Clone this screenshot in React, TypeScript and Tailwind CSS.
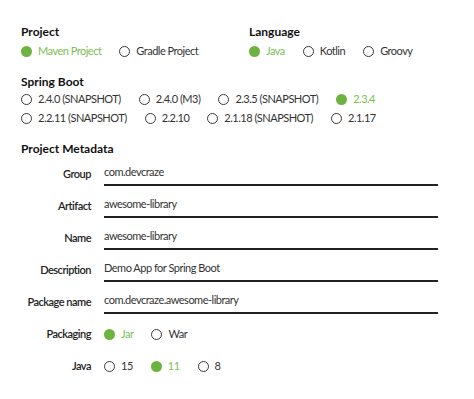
import React from 'react'

const green = 'bg-[#6db33f]'

function Radio({ label, checked }: { label: string; checked?: boolean }) {
  return (
    <div className="flex items-center gap-[6px]">
      <span
        className={`w-[11px] h-[11px] rounded-full shrink-0 ${
          checked ? `${green}` : 'border-[1.5px] border-[#3a3a3a] bg-white'
        }`}
      />
      <span className={checked ? 'text-[#7bbf52]' : 'text-[#333]'}>{label}</span>
    </div>
  )
}

function Heading({ children }: { children: React.ReactNode }) {
  return <h3 className="h-4 leading-4 text-[12px] font-bold text-[#111] tracking-normal">{children}</h3>
}

function Field({ label, children, line = true }: { label: string; children: React.ReactNode; line?: boolean }) {
  return (
    <div className="flex items-stretch h-6">
      <div className="w-[70px] flex items-center justify-end text-[#222] font-semibold">{label}</div>
      <div
        className={`ml-[13px] w-[334px] flex items-center ${
          line ? 'border-b-2 border-[#222] pb-[1px]' : ''
        }`}
      >
        {children}
      </div>
    </div>
  )
}

export default function App() {
  return (
    <div
      className="w-[474px] h-[399px] bg-white pt-6 pl-[21px] text-[11px] text-[#333] tracking-[-0.5px]"
      style={{ fontFamily: 'Lato, "Open Sans", sans-serif' }}
    >
      {/* Project / Language */}
      <div className="flex">
        <div className="w-[228px]">
          <Heading>Project</Heading>
          <div className="flex h-[22px] items-center gap-[18px]">
            <Radio label="Maven Project" checked />
            <Radio label="Gradle Project" />
          </div>
        </div>
        <div>
          <Heading>Language</Heading>
          <div className="flex h-[22px] items-center gap-[18px]">
            <Radio label="Java" checked />
            <Radio label="Kotlin" />
            <Radio label="Groovy" />
          </div>
        </div>
      </div>

      {/* Spring Boot */}
      <div className="mt-3">
        <Heading>Spring Boot</Heading>
        <div className="flex h-[19px] items-center gap-[18px]">
          <Radio label="2.4.0 (SNAPSHOT)" />
          <Radio label="2.4.0 (M3)" />
          <Radio label="2.3.5 (SNAPSHOT)" />
          <Radio label="2.3.4" checked />
        </div>
        <div className="flex h-[19px] items-center gap-[18px]">
          <Radio label="2.2.11 (SNAPSHOT)" />
          <Radio label="2.2.10" />
          <Radio label="2.1.18 (SNAPSHOT)" />
          <Radio label="2.1.17" />
        </div>
      </div>

      {/* Project Metadata */}
      <div className="mt-[13px]">
        <Heading>Project Metadata</Heading>
        <div className="mt-[5px] flex flex-col gap-2">
          <Field label="Group">com.devcraze</Field>
          <Field label="Artifact">awesome-library</Field>
          <Field label="Name">awesome-library</Field>
          <Field label="Description">Demo App for Spring Boot</Field>
          <Field label="Package name">com.devcraze.awesome-library</Field>
          <Field label="Packaging" line={false}>
            <div className="flex items-center gap-[18px]">
              <Radio label="Jar" checked />
              <Radio label="War" />
            </div>
          </Field>
          <Field label="Java" line={false}>
            <div className="flex items-center gap-[18px]">
              <Radio label="15" />
              <Radio label="11" checked />
              <Radio label="8" />
            </div>
          </Field>
        </div>
      </div>
    </div>
  )
}
